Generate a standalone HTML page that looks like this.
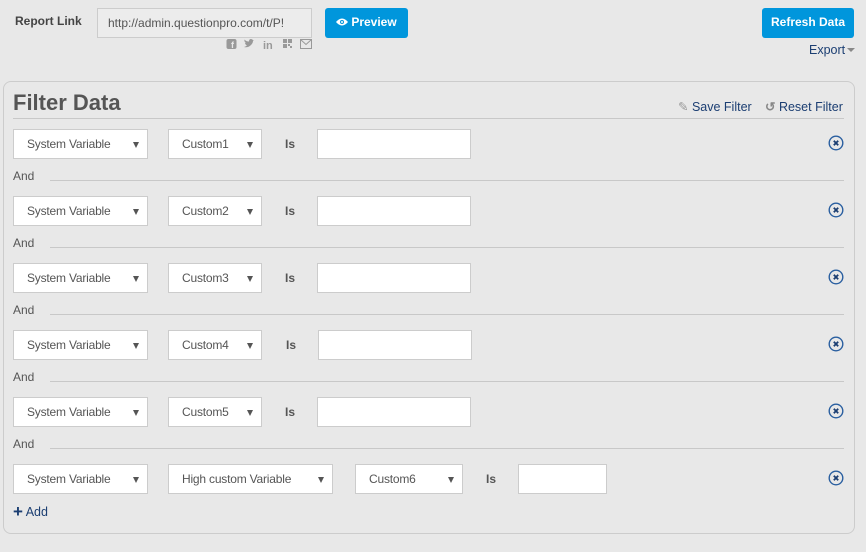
<!DOCTYPE html>
<html><head><meta charset="utf-8"><style>
*{box-sizing:border-box;margin:0;padding:0}
body{width:866px;height:552px;background:#e8e8e8;font-family:"Liberation Sans",sans-serif;color:#444;position:relative;overflow:hidden;font-size:12px}
.a{position:absolute}
.btn{background:#0096dc;color:#fff;border-radius:3px;font-weight:bold;font-size:12px;text-align:center;line-height:29px}
.sel,.inp{position:absolute;background:#fff;border:1px solid #ccc;height:30px}
.sel{font-size:12px;color:#555;line-height:28px;padding-left:13px;letter-spacing:-0.2px}
.sel:after{content:"";position:absolute;right:8px;top:12px;border-left:3px solid transparent;border-right:3px solid transparent;border-top:6px solid #555}
.is{position:absolute;font-weight:bold;font-size:12px;color:#555}
.and{position:absolute;left:13px;font-size:12px;color:#555}
.ln{position:absolute;left:50px;width:794px;height:1px;background:#c8c8c8}
.x{position:absolute;left:828px;width:16px;height:16px}
.lk{color:#1b3e72;font-size:12.5px}
</style></head><body>
<div class="a" style="left:15px;top:14px;font-weight:bold;font-size:12px;color:#444">Report Link</div>
<div class="a" style="left:97px;top:8px;width:215px;height:30px;border:1px solid #ccc;background:#ececec;font-size:12px;color:#555;line-height:28px;padding-left:10px;white-space:nowrap;overflow:hidden">http://admin.questionpro.com/t/P!</div>
<div class="a btn" style="left:325px;top:8px;width:83px;height:30px">
<svg width="12" height="8" viewBox="0 0 12 8" style="margin-right:3px"><path d="M0 4Q6 -3 12 4Q6 11 0 4Z" fill="#fff"/><circle cx="6" cy="4" r="2" fill="#0096dc"/><circle cx="6" cy="4" r="1" fill="#fff"/></svg>Preview</div>
<svg class="a" style="left:226px;top:38px" width="88" height="13" viewBox="0 0 88 13">
<rect x="0.5" y="1" width="10" height="10" rx="2" fill="#999"/><text x="5" y="10" font-size="9" font-weight="bold" fill="#e8e8e8" font-family="Liberation Sans">f</text>
<path d="M18 9Q22 10 25 7Q27 5 27 3L28 2L27 2.3Q26.5 1 25 1Q23 1 23 3.5Q20 3.5 18.5 1.5Q18 4 20 5L19 5Q19.5 7 21 7.3Q20 8.5 18 9Z" fill="#999"/>
<text x="37" y="11" font-size="11" font-weight="bold" fill="#999" font-family="Liberation Sans">in</text>
<g fill="#999"><rect x="57" y="1" width="4" height="4"/><rect x="62" y="1" width="4" height="4"/><rect x="57" y="6" width="4" height="4"/><rect x="62" y="6" width="2" height="2"/><rect x="64" y="8" width="2" height="2"/></g>
<rect x="74.5" y="1.5" width="11" height="9" fill="none" stroke="#999"/><path d="M74.5 1.5L80 6.5L85.5 1.5" fill="none" stroke="#999"/>
</svg>
<div class="a btn" style="left:762px;top:8px;width:92px;height:30px">Refresh Data</div>
<div class="a lk" style="left:809px;top:43px">Export<span style="display:inline-block;margin-left:2px;border-left:4px solid transparent;border-right:4px solid transparent;border-top:4px solid #888;vertical-align:2px"></span></div>

<div class="a" style="left:3px;top:81px;width:852px;height:453px;border:1px solid #ccc;border-radius:8px"></div>
<div class="a" style="left:13px;top:90px;font-size:22px;font-weight:bold;color:#555">Filter Data</div>
<div class="a" style="left:13px;top:118px;width:831px;height:1px;background:#c8c8c8"></div>
<div class="a lk" style="left:678px;top:99px"><span style="color:#999">✎</span> Save Filter</div>
<div class="a lk" style="left:765px;top:99px"><span style="color:#888;font-weight:bold">↺</span> Reset Filter</div>

<svg width="0" height="0" style="position:absolute"><defs><g id="xi"><circle cx="8" cy="8" r="6.8" fill="none" stroke="#2a5fa0" stroke-width="1.4"/><path d="M5.8 5.8L10.2 10.2M10.2 5.8L5.8 10.2" stroke="#1b3e72" stroke-width="1.8"/></g></defs></svg>

<div class="sel" style="left:13px;top:129px;width:135px">System Variable</div><div class="sel" style="left:168px;top:129px;width:94px">Custom1</div><div class="is" style="left:285px;top:137px">Is</div><div class="inp" style="left:317px;top:129px;width:154px"></div><svg class="x" style="top:135px"><use href="#xi"/></svg>
<div class="and" style="top:169px">And</div><div class="ln" style="top:180px"></div>
<div class="sel" style="left:13px;top:196px;width:135px">System Variable</div><div class="sel" style="left:168px;top:196px;width:94px">Custom2</div><div class="is" style="left:285px;top:204px">Is</div><div class="inp" style="left:317px;top:196px;width:154px"></div><svg class="x" style="top:202px"><use href="#xi"/></svg>
<div class="and" style="top:236px">And</div><div class="ln" style="top:247px"></div>
<div class="sel" style="left:13px;top:263px;width:135px">System Variable</div><div class="sel" style="left:168px;top:263px;width:94px">Custom3</div><div class="is" style="left:285px;top:271px">Is</div><div class="inp" style="left:317px;top:263px;width:154px"></div><svg class="x" style="top:269px"><use href="#xi"/></svg>
<div class="and" style="top:303px">And</div><div class="ln" style="top:314px"></div>
<div class="sel" style="left:13px;top:330px;width:135px">System Variable</div><div class="sel" style="left:168px;top:330px;width:94px">Custom4</div><div class="is" style="left:286px;top:338px">Is</div><div class="inp" style="left:318px;top:330px;width:154px"></div><svg class="x" style="top:336px"><use href="#xi"/></svg>
<div class="and" style="top:370px">And</div><div class="ln" style="top:381px"></div>
<div class="sel" style="left:13px;top:397px;width:135px">System Variable</div><div class="sel" style="left:168px;top:397px;width:94px">Custom5</div><div class="is" style="left:285px;top:405px">Is</div><div class="inp" style="left:317px;top:397px;width:154px"></div><svg class="x" style="top:403px"><use href="#xi"/></svg>
<div class="and" style="top:437px">And</div><div class="ln" style="top:448px"></div>
<div class="sel" style="left:13px;top:464px;width:135px">System Variable</div><div class="sel" style="left:168px;top:464px;width:165px">High custom Variable</div><div class="sel" style="left:355px;top:464px;width:108px">Custom6</div><div class="is" style="left:486px;top:472px">Is</div><div class="inp" style="left:518px;top:464px;width:89px"></div><svg class="x" style="top:470px"><use href="#xi"/></svg>
<div class="a lk" style="left:13px;top:505px"><b style="font-size:17px;line-height:12px;vertical-align:-1px">+</b> Add</div>
</body></html>
